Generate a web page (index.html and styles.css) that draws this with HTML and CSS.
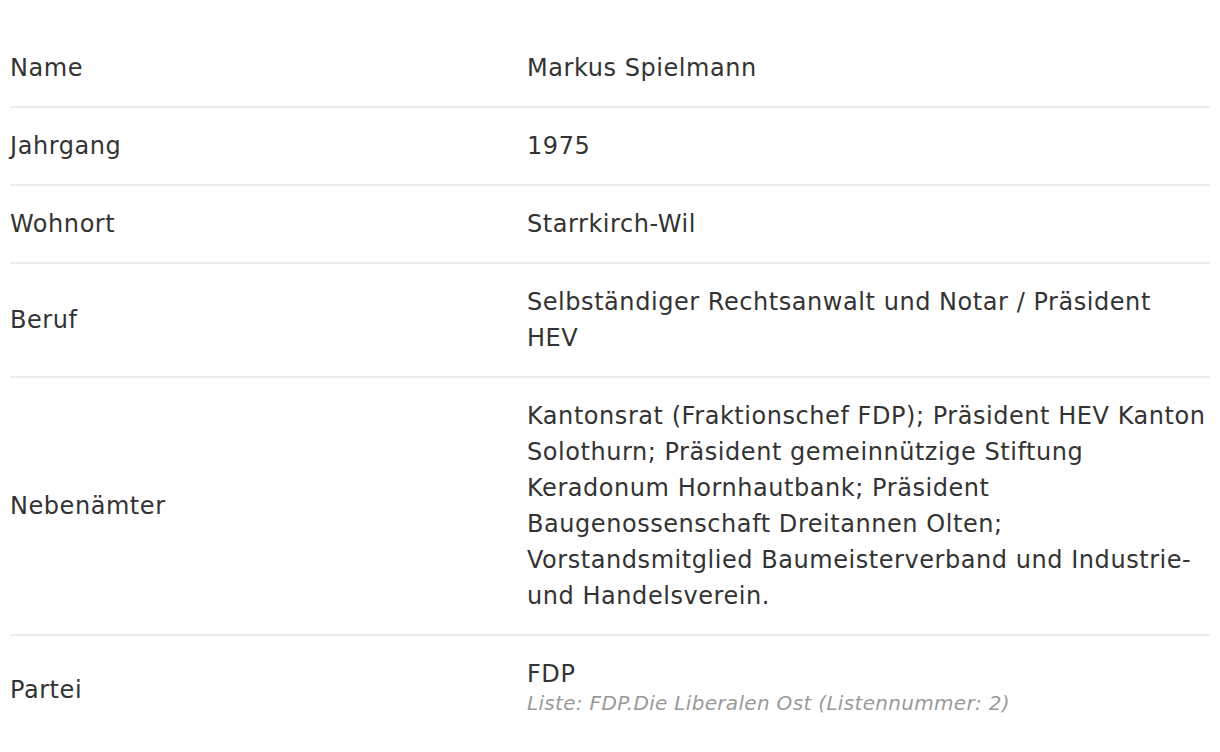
FILE: index.html
```html
<!DOCTYPE html>
<html lang="de">
<head>
<meta charset="utf-8">
<title>Kandidat</title>
<link rel="stylesheet" href="styles.css">
</head>
<body>
<div class="table">
  <div class="row">
    <div class="label">Name</div>
    <div class="value">Markus Spielmann</div>
  </div>
  <div class="row">
    <div class="label">Jahrgang</div>
    <div class="value">1975</div>
  </div>
  <div class="row">
    <div class="label">Wohnort</div>
    <div class="value">Starrkirch-Wil</div>
  </div>
  <div class="row">
    <div class="label">Beruf</div>
    <div class="value">Selbständiger Rechtsanwalt und Notar / Präsident HEV</div>
  </div>
  <div class="row">
    <div class="label">Nebenämter</div>
    <div class="value">Kantonsrat (Fraktionschef FDP); Präsident HEV Kanton Solothurn; Präsident gemeinnützige Stiftung Keradonum Hornhautbank; Präsident Baugenossenschaft Dreitannen Olten; Vorstandsmitglied Baumeisterverband und Industrie- und Handelsverein.</div>
  </div>
  <div class="row last">
    <div class="label">Partei</div>
    <div class="value">FDP<div class="note">Liste: FDP.Die Liberalen Ost (Listennummer: 2)</div></div>
  </div>
</div>
</body>
</html>
```
FILE: styles.css
```css
html, body {
  margin: 0;
  background: #ffffff;
}
body {
  padding: 30px 10px 0;
  font-family: "DejaVu Sans", "Open Sans", sans-serif;
  font-size: 24px;
  line-height: 36px;
  letter-spacing: 0.55px;
  color: #333333;
}
.table {
  display: flex;
  flex-direction: column;
}
.row {
  display: grid;
  grid-template-columns: 517px 1fr;
  align-items: center;
  padding: 20px 0;
  border-bottom: 2px solid #ececec;
}
.row.last {
  border-bottom: none;
}
.value {
  padding-right: 2px;
}
.note {
  font-size: 20px;
  line-height: 22px;
  margin-bottom: 10px;
  font-style: italic;
  letter-spacing: 0.32px;
  color: #9a9a9a;
}
```
